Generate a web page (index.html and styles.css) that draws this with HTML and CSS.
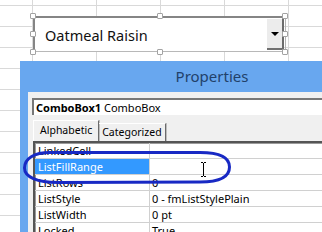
FILE: index.html
```html
<!DOCTYPE html>
<html lang="en">
<head>
    <meta charset="UTF-8">
    <title>ComboBox Properties</title>
    <link rel="stylesheet" href="styles.css">
</head>
<body>
    <div class="combo-sel">
        <div class="combo">
            <span class="combo-text">Oatmeal Raisin</span>
            <span class="combo-btn"><span class="arrow"></span></span>
        </div>
        <span class="handle h-tl"></span>
        <span class="handle h-tc"></span>
        <span class="handle h-tr"></span>
        <span class="handle h-ml"></span>
        <span class="handle h-mr"></span>
        <span class="handle h-bl"></span>
        <span class="handle h-bc"></span>
        <span class="handle h-br"></span>
    </div>

    <div class="props">
        <div class="props-title">Properties</div>
        <div class="props-body">
            <div class="obj-box"><b>ComboBox1</b> ComboBox</div>
            <div class="tabs">
                <div class="tab active">Alphabetic</div>
                <div class="tab">Categorized</div>
            </div>
            <div class="grid">
                <div class="row"><div class="name">LinkedCell</div><div class="value"></div></div>
                <div class="row selected"><div class="name">ListFillRange</div><div class="value"></div></div>
                <div class="row"><div class="name">ListRows</div><div class="value">0</div></div>
                <div class="row"><div class="name">ListStyle</div><div class="value">0 - fmListStylePlain</div></div>
                <div class="row"><div class="name">ListWidth</div><div class="value">0 pt</div></div>
                <div class="row"><div class="name">Locked</div><div class="value">True</div></div>
            </div>
        </div>
    </div>

    <!-- hand drawn marker round the ListFillRange row, plus the text cursor -->
    <svg class="overlay" width="322" height="232" viewBox="0 0 322 232">
        <path d="M50 152.5 L200 152.5 C221 152.5 229.5 158 229.5 167 C229.5 176.5 220 182 200 182 L58 182.5 C37 182.5 24.5 177 24.5 168 C24.5 158.5 34 152.5 50 152.5 Z"
              fill="none" stroke="#1829c4" stroke-width="3"/>
        <path d="M203.5 163 V176 M201 162.5 H203 M204 162.5 H206 M201 176.5 H203 M204 176.5 H206"
              stroke="#000" stroke-width="1" fill="none"/>
    </svg>
</body>
</html>
```

FILE: styles.css
```css
body {
    margin: 0;
    width: 322px;
    height: 232px;
    overflow: hidden;
    position: relative;
    background-color: #fff;
    background-image:
        linear-gradient(to right, #d9d9d9 1px, transparent 1px),
        linear-gradient(to bottom, #d9d9d9 1px, transparent 1px);
    background-size: 64px 21px;
    background-position: 32px 5px;
    font-family: "Noto Sans", sans-serif;
}

/* selected combo box on the sheet */
.combo-sel {
    position: absolute;
    left: 33px;
    top: 16px;
    width: 253px;
    height: 36px;
    box-sizing: border-box;
    border-right: 1px solid #b4b4b4;
}

.combo {
    display: flex;
    align-items: center;
    height: 100%;
    margin-right: 1px;
    box-sizing: border-box;
    background: #fff;
    border-top: 2px solid #858585;
    border-left: 2px solid #858585;
    border-bottom: 1px solid #b8b8b8;
    border-right: 2px solid #6c6c6c;
}

.combo-text {
    padding-left: 10px;
    font-size: 14.5px;
    color: #111;
}

.combo-btn {
    margin-left: auto;
    width: 15px;
    height: 31px;
    box-sizing: border-box;
    background: #ececec;
    border-bottom: 2px solid #707070;
    display: flex;
    align-items: center;
    justify-content: center;
}

.arrow {
    width: 0;
    height: 0;
    border-left: 4px solid transparent;
    border-right: 4px solid transparent;
    border-top: 4px solid #000;
}

.handle {
    position: absolute;
    width: 6px;
    height: 6px;
    box-sizing: border-box;
    background: #fff;
    border: 1px solid #a3a3a3;
    border-radius: 1px;
}

.h-tl { left: -3px; top: -3px; }
.h-tc { left: 124px; top: -3px; }
.h-tr { right: -3px; top: -3px; }
.h-ml { left: -3px; top: 15px; }
.h-mr { right: -3px; top: 15px; }
.h-bl { left: -3px; bottom: -3px; }
.h-bc { left: 124px; bottom: -3px; }
.h-br { right: -3px; bottom: -3px; }

/* properties window */
.props {
    position: absolute;
    left: 20px;
    top: 61px;
    width: 384px;
    height: 171px;
    overflow: hidden;
    background: #68a7ef;
}

.props-title {
    height: 31px;
    line-height: 31px;
    text-align: center;
    font-size: 15px;
    color: #22416a;
}

.props-body {
    margin-left: 8px;
    height: 140px;
    background: #f0f0f0;
    padding: 6px 0 0 4px;
    box-sizing: border-box;
}

.obj-box {
    height: 17px;
    box-sizing: border-box;
    background: #fff;
    border-top: 2px solid #777;
    border-left: 2px solid #777;
    padding-left: 2px;
    font-size: 11px;
    line-height: 15px;
    color: #000;
}

.tabs {
    display: flex;
    align-items: flex-start;
    height: 26px;
    padding: 5px 0 0 1px;
    box-sizing: border-box;
    font-size: 10.5px;
}

.tab {
    box-sizing: border-box;
    margin-top: 3px;
    height: 18px;
    line-height: 16px;
    padding: 0 3px;
    border-top: 1px solid #fff;
    border-right: 1px solid #6b6b6b;
    box-shadow: 1px 0 0 #bdbdbd;
    color: #000;
}

.tab.active {
    margin-top: 0;
    height: 21px;
    padding: 0 6px;
    border-left: 1px solid #fff;
    line-height: 19px;
}

.grid {
    margin-left: 1px;
    background: #fff;
    border-top: 2px solid #555;
    border-left: 2px solid #555;
    box-shadow: inset 1px 1px 0 #9a9a9a;
    font-size: 11px;
    color: #000;
}

.row {
    display: flex;
    height: 16px;
    box-sizing: border-box;
    border-bottom: 1px solid #d0d0d0;
    line-height: 16px;
}

.name {
    width: 115px;
    box-sizing: border-box;
    padding-left: 3px;
    border-right: 1px solid #d0d0d0;
    white-space: nowrap;
}

.value {
    flex: 1;
    padding-left: 2px;
    white-space: nowrap;
}

.row.selected .name {
    background: #3399ff;
    color: #fff;
}

.overlay {
    position: absolute;
    left: 0;
    top: 0;
    pointer-events: none;
}
```
